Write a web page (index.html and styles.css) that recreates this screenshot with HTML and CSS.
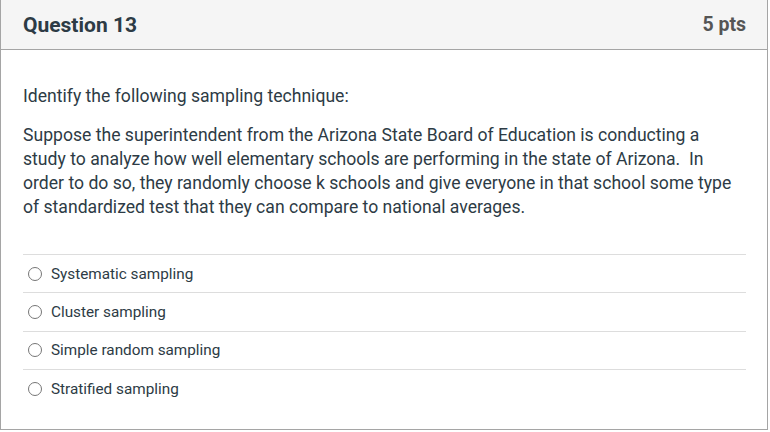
FILE: index.html
```
<!DOCTYPE html>
<html>
<head>
<meta charset="utf-8">
<link rel="stylesheet" href="styles.css">
</head>
<body>
<div class="card">
  <div class="header">
    <span class="title">Question 13</span>
    <span class="pts">5 pts</span>
  </div>
  <div class="content">
    <p class="lead">Identify the following sampling technique:</p>
    <p class="text">Suppose the superintendent from the Arizona State Board of Education is conducting a study to analyze how well elementary schools are performing in the state of Arizona.&nbsp; In order to do so, they randomly choose k schools and give everyone in that school some type of standardized test that they can compare to national averages.</p>
    <div class="answers">
      <div class="answer"><span class="radio"></span><span class="label">Systematic sampling</span></div>
      <div class="answer"><span class="radio"></span><span class="label">Cluster sampling</span></div>
      <div class="answer"><span class="radio"></span><span class="label">Simple random sampling</span></div>
      <div class="answer"><span class="radio"></span><span class="label">Stratified sampling</span></div>
    </div>
  </div>
</div>
</body>
</html>
```
FILE: styles.css
```
html, body {
  margin: 0;
  padding: 0;
  background: #ffffff;
}
body {
  font-family: Roboto, "Liberation Sans", sans-serif;
  color: #2d3b45;
}
.card {
  width: 766px;
  height: 429px;
  border: 1px solid #a5a5a5;
  border-top: none;
  box-sizing: content-box;
}
.header {
  height: 50px;
  background: #f5f5f5;
  border-bottom: 1px solid #a5a5a5;
  display: flex;
  align-items: center;
  justify-content: space-between;
  padding: 0 21px 0 22px;
  box-sizing: border-box;
}
.title {
  font-size: 21px;
  font-weight: 700;
  color: #2d3b45;
}
.pts {
  font-size: 19.5px;
  font-weight: 700;
  color: #555555;
}
.content {
  padding: 34px 21px 0 22px;
}
.lead {
  margin: 0 0 15px 0;
  font-size: 17.6px;
  line-height: 24px;
}
.text {
  margin: 0 0 35px 0;
  font-size: 17.6px;
  line-height: 24px;
}
.answers {
  display: flex;
  flex-direction: column;
}
.answer {
  display: flex;
  align-items: center;
  height: 37.3px;
  border-top: 1px solid #dddddd;
  padding-left: 5px;
  font-size: 15.3px;
}
.radio {
  width: 12px;
  height: 12px;
  border: 1px solid #767676;
  border-radius: 50%;
  margin-right: 9px;
  flex: none;
}
.label {
  color: #2d3b45;
}
```
